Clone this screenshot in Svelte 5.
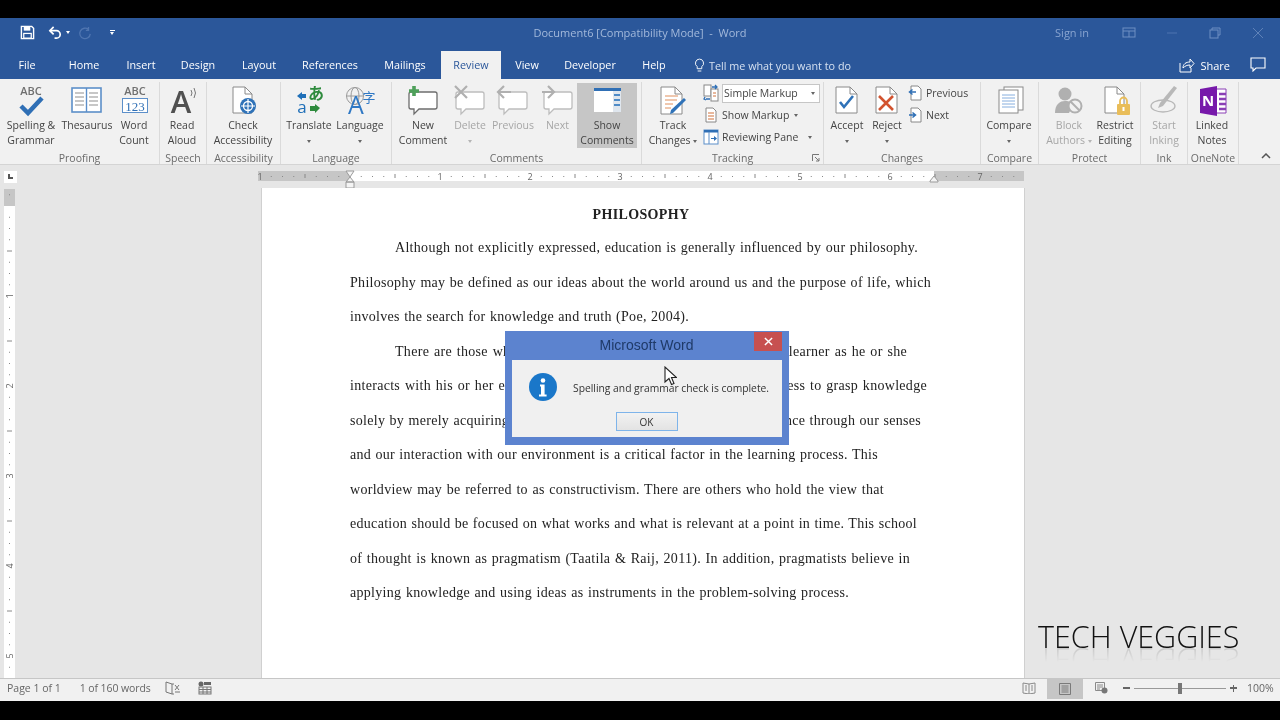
<script>
	// width of each tab, taken so the labels sit on the same centres as in Word
	const tabs = [
		{ name: 'File', w: 46 },
		{ name: 'Home', w: 68 },
		{ name: 'Insert', w: 46 },
		{ name: 'Design', w: 68 },
		{ name: 'Layout', w: 54 },
		{ name: 'References', w: 88 },
		{ name: 'Mailings', w: 62 },
		{ name: 'Review', w: 60 },
		{ name: 'View', w: 52 },
		{ name: 'Developer', w: 74 },
		{ name: 'Help', w: 54 }
	];

	const groups = [
		{ name: 'Proofing', w: 160, items: [
			{ icon: 'spell', w: 58, lines: ['Spelling &', 'Grammar'] },
			{ icon: 'thesaurus', w: 54, lines: ['Thesaurus'] },
			{ icon: 'count', w: 40, lines: ['Word', 'Count'] }
		] },
		{ name: 'Speech', w: 47, items: [{ icon: 'read', w: 40, lines: ['Read', 'Aloud'] }] },
		{ name: 'Accessibility', w: 74, items: [{ icon: 'check', w: 68, lines: ['Check', 'Accessibility'] }] },
		{ name: 'Language', w: 111, items: [
			{ icon: 'translate', w: 52, lines: ['Translate'], drop: true },
			{ icon: 'language', w: 50, lines: ['Language'], drop: true }
		] },
		{ name: 'Comments', w: 250, items: [
			{ icon: 'new', w: 58, lines: ['New', 'Comment'] },
			{ icon: 'delete', w: 36, lines: ['Delete'], drop: true, off: true },
			{ icon: 'prev', w: 50, lines: ['Previous'], off: true },
			{ icon: 'next', w: 39, lines: ['Next'], off: true },
			{ icon: 'show', w: 60, lines: ['Show', 'Comments'], on: true }
		] },
		{ name: 'Tracking', w: 182, launcher: true, items: [
			{ icon: 'track', w: 58, lines: ['Track', 'Changes'], tail: true },
			{ w: 120, rows: [
				{ icon: 'markup', text: 'Simple Markup', select: true },
				{ icon: 'showmark', text: 'Show Markup', tail: true },
				{ icon: 'pane', text: 'Reviewing Pane', far: true }
			] }
		] },
		{ name: 'Changes', w: 157, items: [
			{ icon: 'accept', w: 42, lines: ['Accept'], drop: true },
			{ icon: 'reject', w: 38, lines: ['Reject'], drop: true },
			{ w: 70, rows: [
				{ icon: 'docprev', text: 'Previous' },
				{ icon: 'docnext', text: 'Next' }
			] }
		] },
		{ name: 'Compare', w: 58, items: [{ icon: 'compare', w: 52, lines: ['Compare'], drop: true }] },
		{ name: 'Protect', w: 102, items: [
			{ icon: 'block', w: 56, lines: ['Block', 'Authors'], tail: true, off: true },
			{ icon: 'restrict', w: 36, lines: ['Restrict', 'Editing'] }
		] },
		{ name: 'Ink', w: 47, items: [{ icon: 'ink', w: 42, lines: ['Start', 'Inking'], off: true }] },
		{ name: 'OneNote', w: 51, items: [{ icon: 'onenote', w: 44, lines: ['Linked', 'Notes'] }] }
	];

	const lines = [
		{ w: 523, indent: true, text: 'Although not explicitly expressed, education is generally influenced by our philosophy.' },
		{ w: 581, text: 'Philosophy may be defined as our ideas about the world around us and the purpose of life, which' },
		{ w: 339, text: 'involves the search for knowledge and truth (Poe, 2004).' },
		{ w: 512, indent: true, text: 'There are those who believe that all reality is constructed by the learner as he or she' },
		{ w: 577, text: 'interacts with his or her environment and that it is up to a learner\u2019s process to grasp knowledge' },
		{ w: 571, text: 'solely by merely acquiring facts, while others would value direct experience through our senses' },
		{ w: 528, text: 'and our interaction with our environment is a critical factor in the learning process. This' },
		{ w: 534, text: 'worldview may be referred to as constructivism. There are others who hold the view that' },
		{ w: 567, text: 'education should be focused on what works and what is relevant at a point in time. This school' },
		{ w: 560, text: 'of thought is known as pragmatism (Taatila & Raij, 2011). In addition, pragmatists believe in' },
		{ w: 499, text: 'applying knowledge and using ideas as instruments in the problem-solving process.' }
	];

	// one tick every eighth of an inch, 90px to the inch
	const step = 11.25;
	const marks = [];
	for (let i = -8; i <= 60; i++) marks.push(i);
	const vmarks = [];
	for (let i = -1; i <= 41; i++) vmarks.push(i);
</script>

{#snippet bubble(x, stroke)}
	<path d="M{x} 10h24a2 2 0 0 1 2 2v13a2 2 0 0 1-2 2h-16l-5 5v-5h-3a2 2 0 0 1-2-2v-13a2 2 0 0 1 2-2z" fill="#fff" stroke={stroke} stroke-width="1.3" />
{/snippet}

{#snippet doc(x, y, w, h)}
	<path d="M{x} {y}h{w - 7}l7 7v{h - 7}h-{w}z" fill="#fff" stroke="#8a8a8a" stroke-width="1" />
	<path d="M{x + w - 7} {y}v7h7" fill="none" stroke="#8a8a8a" stroke-width="1" />
{/snippet}

{#snippet icon(name)}
	<svg class="big" viewBox="0 0 40 36" width="40" height="36" aria-hidden="true">
		{#if name === 'spell'}
			<text x="20" y="13" class="abc">ABC</text>
			<path d="M10 24l7 7 14-15" fill="none" stroke="#2f6fb5" stroke-width="4.5" />
		{:else if name === 'thesaurus'}
			<rect x="5" y="6" width="29" height="24" fill="#fff" stroke="#5c8fc9" stroke-width="1.6" />
			<path d="M19.5 6v24" stroke="#5c8fc9" stroke-width="1.4" />
			<path d="M8 11h9M8 15h9M8 19h9M8 23h9M22 11h9M22 15h9M22 19h9M22 23h9" stroke="#8f8f8f" stroke-width="1.1" />
		{:else if name === 'count'}
			<text x="21" y="13" class="abc">ABC</text>
			<rect x="8.5" y="16.5" width="25" height="14" fill="#fff" stroke="#5c8fc9" />
			<text x="21" y="28.5" class="nums">123</text>
		{:else if name === 'read'}
			<text x="19" y="31" class="bigA">A</text>
			<path d="M32 6q3 5 0 10M29 8q2 3 0 6" fill="none" stroke="#777" />
		{:else if name === 'check'}
			{@render doc(10, 5, 19, 26)}
			<circle cx="25" cy="24" r="8" fill="#2f72b8" />
			<circle cx="25" cy="24" r="4.5" fill="none" stroke="#fff" stroke-width="1.3" />
			<path d="M25 17v14M18 24h14" stroke="#fff" stroke-width="1.2" />
		{:else if name === 'translate'}
			<path d="M8 14l5-4v2h4v4h-4v2z" fill="#1f6fb8" />
			<text x="27" y="17" class="kana">あ</text>
			<text x="13" y="31" class="latin">a</text>
			<path d="M31 26l-5 5v-2h-5v-5h5v-2z" fill="#2e8b3d" />
		{:else if name === 'language'}
			<circle cx="15" cy="14" r="8.5" fill="none" stroke="#9a9a9a" />
			<ellipse cx="15" cy="14" rx="4" ry="8.5" fill="none" stroke="#9a9a9a" />
			<path d="M6.5 14h17" stroke="#9a9a9a" />
			<text x="16" y="32" class="langA">A</text>
			<text x="29" y="20" class="han">字</text>
		{:else if name === 'new'}
			{@render bubble(8, '#6d6d6d')}
			<path d="M11 4v10M6 9h10" stroke="#4ea05a" stroke-width="3.6" />
		{:else if name === 'delete'}
			{@render bubble(8, '#bdbdbd')}
			<path d="M5 4l12 12M17 4l-12 12" stroke="#b0b0b0" stroke-width="2.2" />
		{:else if name === 'prev'}
			{@render bubble(8, '#bdbdbd')}
			<path d="M18 10h-12M11 4l-6 6 6 6" fill="none" stroke="#b0b0b0" stroke-width="2.2" />
		{:else if name === 'next'}
			{@render bubble(8, '#bdbdbd')}
			<path d="M4 10h12M10 4l6 6-6 6" fill="none" stroke="#b0b0b0" stroke-width="2.2" />
		{:else if name === 'show'}
			<rect x="7" y="6" width="27" height="24" fill="#fff" />
			<rect x="7" y="6" width="27" height="3" fill="#2f6fb5" />
			<rect x="26" y="9" width="8" height="21" fill="#dfe6ee" />
			<path d="M27 13h6M27 18h6M27 23h6" stroke="#4f8bc7" stroke-width="2" />
		{:else if name === 'track'}
			{@render doc(8, 5, 21, 27)}
			<path d="M12 14h13M12 18h12M12 22h8M12 26h6" stroke="#e0905f" />
			<path d="M33 18l-13 13-3 1 1-4 13-12z" fill="#2f72b8" />
		{:else if name === 'accept'}
			{@render doc(9, 5, 21, 26)}
			<path d="M13 20l4 5 9-11" fill="none" stroke="#2f72b8" stroke-width="2.6" />
		{:else if name === 'reject'}
			{@render doc(9, 5, 21, 26)}
			<path d="M12 14l14 14M26 14l-14 14" stroke="#d2532f" stroke-width="2.6" />
		{:else if name === 'compare'}
			<rect x="15" y="5" width="19" height="23" fill="#fff" stroke="#8a8a8a" />
			<rect x="10" y="8" width="19" height="23" fill="#fff" stroke="#8a8a8a" />
			<path d="M13 13h13M13 16h13M13 19h13M13 22h13M13 25h13" stroke="#86aede" />
		{:else if name === 'block'}
			<circle cx="16" cy="12" r="6.5" fill="#b0b0b0" />
			<path d="M6 31c0-9 5-12 10-12s7 2 8 4l-4 8z" fill="#b0b0b0" />
			<circle cx="26" cy="24" r="6.5" fill="#f1f1f1" stroke="#b0b0b0" stroke-width="2" />
			<path d="M21.5 19.5l9 9" stroke="#b0b0b0" stroke-width="2" />
		{:else if name === 'restrict'}
			{@render doc(10, 5, 19, 26)}
			<rect x="22" y="22" width="13" height="11" rx="1" fill="#e9bd59" />
			<path d="M25 22v-3a3.5 3.5 0 0 1 7 0v3" fill="none" stroke="#e9bd59" stroke-width="1.8" />
			<rect x="27.5" y="25" width="2" height="4" fill="#fff" />
		{:else if name === 'ink'}
			<ellipse cx="19" cy="24" rx="12" ry="6" fill="none" stroke="#b8b8b8" stroke-width="1.3" />
			<path d="M33 6l-14 18-5 2 2-5 14-17z" fill="#b8b8b8" />
		{:else if name === 'onenote'}
			<path d="M24 7h10v24h-10z" fill="#fff" stroke="#8a3fb5" />
			<path d="M27 12h7M27 17h7M27 22h7M27 27h7" stroke="#8a3fb5" stroke-width="2.4" />
			<path d="M8 7l17-3v30l-17-3z" fill="#7719aa" />
			<text x="16" y="24" class="oneN">N</text>
		{/if}
	</svg>
{/snippet}

{#snippet smallIcon(name)}
	<svg class="small" viewBox="0 0 16 18" width="16" height="18" aria-hidden="true">
		{#if name === 'markup'}
			<rect x="1" y="1" width="7" height="11" fill="#fff" stroke="#888" />
			<rect x="8" y="5" width="7" height="12" fill="#fff" stroke="#888" />
			<path d="M3 15h4M2 13l-1 2 2 1" fill="none" stroke="#2f6fb5" stroke-width="1.3" />
			<path d="M9 3h5M12 1l2 2-2 2" fill="none" stroke="#2f6fb5" stroke-width="1.3" />
			<path d="M10 9h3M10 12h3" stroke="#d0703a" />
		{:else if name === 'showmark'}
			<path d="M3 2h7l3 3v11h-10z" fill="#fff" stroke="#888" />
			<path d="M5 7h6M5 10h6M5 13h6" stroke="#d0703a" />
		{:else if name === 'pane'}
			<rect x="1" y="2" width="14" height="14" fill="#fff" stroke="#5c8fc9" />
			<rect x="1" y="2" width="14" height="2.5" fill="#2f6fb5" />
			<path d="M6 4v12" stroke="#5c8fc9" />
			<path d="M8 10h3v-2l3 2.5-3 2.500v-2h-3z" fill="#2f6fb5" />
		{:else if name === 'docprev'}
			<path d="M4 2h7l3 3v11h-10z" fill="#fff" stroke="#888" />
			<path d="M9 8h-6M5.500 5.500l-3 2.500 3 2.500" fill="none" stroke="#2f6fb5" stroke-width="1.5" />
		{:else if name === 'docnext'}
			<path d="M4 2h7l3 3v11h-10z" fill="#fff" stroke="#888" />
			<path d="M2 9h6M5.500 6.500l3 2.500-3 2.500" fill="none" stroke="#2f6fb5" stroke-width="1.5" />
		{/if}
	</svg>
{/snippet}

<div class="word">
	<header class="titlebar">
		<div class="qat">
			<svg viewBox="0 0 16 16" width="15" height="15" aria-hidden="true">
				<path d="M1.500 1.500h11l2 2v11h-13z" fill="none" stroke="#fff" stroke-width="1.500" />
				<rect x="4" y="2" width="7" height="4" fill="#fff" />
				<rect x="4" y="9" width="8" height="5" fill="none" stroke="#fff" stroke-width="1.300" />
			</svg>
			<svg class="undo" viewBox="0 0 16 16" width="15" height="15" aria-hidden="true">
				<path d="M6 2l-4 4 4 4" fill="none" stroke="#fff" stroke-width="1.800" />
				<path d="M2 6h7a4 4 0 0 1 0 8h-2" fill="none" stroke="#fff" stroke-width="1.800" />
			</svg>
			<span class="caret light"></span>
			<svg class="redo" viewBox="0 0 16 16" width="14" height="14" aria-hidden="true">
				<path d="M12 4a6 6 0 1 0 2 5M12 1v4h-3" fill="none" stroke="#4f75b0" stroke-width="1.500" />
			</svg>
			<span class="custom"></span>
		</div>
		<div class="doctitle">Document6 [Compatibility Mode]&nbsp; -&nbsp; Word</div>
		<div class="winctl">
			<span class="signin">Sign in</span>
			<svg viewBox="0 0 14 12" width="14" height="12" aria-hidden="true">
				<rect x="1" y="1" width="12" height="9" fill="none" stroke="#6f8fc2" />
				<path d="M1 4h12M7 4v6" stroke="#6f8fc2" />
			</svg>
			<svg viewBox="0 0 14 12" width="14" height="12" aria-hidden="true"><path d="M2 6h10" stroke="#4f75b0" /></svg>
			<svg viewBox="0 0 14 12" width="14" height="12" aria-hidden="true">
				<path d="M4 3v-2h8v7h-2" fill="none" stroke="#6f8fc2" />
				<rect x="2" y="3" width="8" height="8" fill="none" stroke="#6f8fc2" />
			</svg>
			<svg viewBox="0 0 14 12" width="14" height="12" aria-hidden="true"><path d="M2 1l10 10M12 1l-10 10" stroke="#5f82b8" /></svg>
		</div>
	</header>

	<nav class="tabs">
		{#each tabs as tab}
			<span class="tab" class:active={tab.name === 'Review'} style="width: {tab.w}px">{tab.name}</span>
		{/each}
		<span class="tell">
			<svg viewBox="0 0 12 16" width="11" height="15" aria-hidden="true">
				<path d="M6 1a4.500 4.500 0 0 0-2.500 8.200v2.300h5v-2.300a4.500 4.500 0 0 0-2.500-8.200zM4 14h4" fill="none" stroke="#fff" />
			</svg>
			Tell me what you want to do
		</span>
		<span class="share">
			<svg viewBox="0 0 16 16" width="16" height="16" aria-hidden="true">
				<path d="M1 6v9h11v-4M4 11c0-4 3-6 7-6v-3l4 4.500-4 4.500v-3c-3 0-5 1-7 3z" fill="none" stroke="#fff" />
			</svg>
			Share
		</span>
		<svg class="talk" viewBox="0 0 16 16" width="16" height="16" aria-hidden="true">
			<path d="M1 2h14v10h-9l-3 3v-3h-2z" fill="none" stroke="#fff" stroke-width="1.100" />
		</svg>
	</nav>

	<section class="ribbon">
		{#each groups as g}
			<div class="group" style="width: {g.w}px">
				<div class="cmds">
					{#each g.items as it}
						{#if it.rows}
							<div class="rows" style="width: {it.w}px">
								{#each it.rows as r}
									<div class="row">
										{@render smallIcon(r.icon)}
										<span class="rowtext" class:select={r.select} class:far={r.far}>
											{r.text}
											{#if r.tail}<span class="caret"></span>{/if}
											{#if r.select || r.far}<span class="caret end"></span>{/if}
										</span>
									</div>
								{/each}
							</div>
						{:else}
							<div class="cmd" class:off={it.off} class:on={it.on} style="width: {it.w}px">
								{@render icon(it.icon)}
								{#each it.lines as line, i}
									<span class="line">
										{line}
										{#if it.tail && i === it.lines.length - 1}<span class="caret"></span>{/if}
									</span>
								{/each}
								{#if it.drop}<span class="line"><span class="caret"></span></span>{/if}
							</div>
						{/if}
					{/each}
				</div>
				<div class="gname">{g.name}</div>
				{#if g.launcher}
					<svg class="launcher" viewBox="0 0 8 8" width="8" height="8" aria-hidden="true">
						<path d="M.5 7v-6.500h6.500M3 3l4 4M7 4v3h-3" fill="none" stroke="#777" />
					</svg>
				{/if}
			</div>
		{/each}
		<svg class="collapse" viewBox="0 0 10 6" width="10" height="6" aria-hidden="true">
			<path d="M1 5l4-4 4 4" fill="none" stroke="#555" stroke-width="1.500" />
		</svg>
	</section>

	<div class="workspace">
		<aside class="rail">
			<div class="tabstop"><span></span></div>
			<svg class="vruler" viewBox="0 0 11 489" width="11" height="489" aria-hidden="true">
				<rect width="11" height="17" fill="#c6c6c6" />
				<rect y="17" width="11" height="472" fill="#fff" />
				{#each vmarks as i}
					{#if i !== 0 && i % 8 === 0}
						<text class="rnum" transform="translate(9 {17 + i * step}) rotate(-90)">{Math.abs(i) / 8}</text>
					{:else if i !== 0 && i % 4 === 0}
						<path d="M3 {17 + i * step}h5" stroke="#888" />
					{:else if i !== 0}
						<path d="M5 {17 + i * step}h1" stroke="#888" />
					{/if}
				{/each}
			</svg>
		</aside>
		<main class="main">
			<svg class="hruler" viewBox="0 0 766 23" width="766" height="23" aria-hidden="true">
				<rect y="6" width="766" height="10" fill="#c6c6c6" />
				<rect x="92" y="6" width="584" height="10" fill="#fff" />
				{#each marks as i}
					{#if i !== 0 && i % 8 === 0}
						<text class="rnum" x={92 + i * step} y="14.500">{Math.abs(i) / 8}</text>
					{:else if i !== 0 && i % 4 === 0}
						<path d="M{92 + i * step} 9v4" stroke="#888" />
					{:else if i !== 0}
						<path d="M{92 + i * step} 11v1" stroke="#888" />
					{/if}
				{/each}
				<path d="M88 6h8l-4 6zM92 12l4 5h-8zM88 17h8v6h-8zM672 16l4-5 4 5v1h-8z" fill="#f4f4f4" stroke="#9a9a9a" />
			</svg>
			<article class="page">
				<h1>PHILOSOPHY</h1>
				{#each lines as l}
					<p class:indent={l.indent} style="width: {l.w}px">{l.text}</p>
				{/each}
			</article>
		</main>
	</div>

	<footer class="status">
		<span class="pageinfo">Page 1 of 1</span>
		<span class="wordinfo">1 of 160 words</span>
		<svg class="proof" viewBox="0 0 16 14" width="16" height="14" aria-hidden="true">
			<path d="M1 1l6 2v10l-6-2zM7 3h2M7 13h2" fill="none" stroke="#777" />
			<path d="M10 4l4 5M14 4l-4 5M10 11h5" stroke="#777" />
		</svg>
		<svg class="macro" viewBox="0 0 14 14" width="14" height="14" aria-hidden="true">
			<circle cx="3" cy="3" r="2.500" fill="#666" />
			<rect x="6" y="1" width="7" height="3" fill="#666" />
			<rect x="1" y="6" width="12" height="7" fill="none" stroke="#777" />
			<path d="M1 8.500h12M1 11h12M5 6v7M9 6v7" stroke="#777" />
		</svg>
		<div class="views">
			<span class="view">
				<svg viewBox="0 0 14 12" width="14" height="12" aria-hidden="true">
					<path d="M1 1l6 1 6-1v10l-6 1-6-1zM7 2v10M3 4h2M3 6h2M3 8h2M9 4h2M9 6h2M9 8h2" fill="none" stroke="#8a8a8a" />
				</svg>
			</span>
			<span class="view current">
				<svg viewBox="0 0 14 12" width="14" height="12" aria-hidden="true">
					<path d="M1.500 .5h11v11h-11zM3.500 3h7M3.500 5h7M3.500 7h7M3.500 9h7" fill="none" stroke="#7a7a7a" />
				</svg>
			</span>
			<span class="view">
				<svg viewBox="0 0 14 12" width="14" height="12" aria-hidden="true">
					<path d="M1.500 .5h9v8h-9zM3 3h6M3 5h6M3 7h3" fill="none" stroke="#8a8a8a" />
					<circle cx="10.500" cy="8.500" r="3" fill="#777" />
				</svg>
			</span>
		</div>
		<div class="zoomctl">
			<span class="pm"></span>
			<span class="slider"><span class="thumb"></span></span>
			<span class="pm plus"></span>
		</div>
		<span class="pct">100%</span>
	</footer>

	<div class="watermark">TECH VEGGIES</div>

	<div class="dialog" role="dialog">
		<div class="dlgtitle">Microsoft Word</div>
		<span class="dlgclose">
			<svg viewBox="0 0 10 10" width="9" height="9" aria-hidden="true">
				<path d="M1 1l8 8M9 1l-8 8" stroke="#fff" stroke-width="1.600" />
			</svg>
		</span>
		<div class="client">
			<div class="msg">
				<svg viewBox="0 0 28 28" width="28" height="28" aria-hidden="true">
					<circle cx="14" cy="14" r="14" fill="#1a77c9" />
					<circle cx="14" cy="7.500" r="2.300" fill="#fff" />
					<path d="M11 11.500h4.600v10h2v2h-7.600v-2h2v-8h-1z" fill="#fff" />
				</svg>
				<span>Spelling and grammar check is complete.</span>
			</div>
			<button class="ok" type="button">OK</button>
		</div>
	</div>

	<svg class="pointer" viewBox="0 0 13 20" width="13" height="20" aria-hidden="true">
		<path d="M1 1v15l4-3.500 2.500 6 2.500-1-2.500-6h5z" fill="#fff" stroke="#222" stroke-width="1.100" />
	</svg>
</div>

<style>
	:global(body) {
		background: #000;
	}

	.word {
		position: relative;
		width: 1280px;
		height: 720px;
		padding: 18px 0 19px;
		box-sizing: border-box;
		display: flex;
		flex-direction: column;
		overflow: hidden;
		font-family: 'Open Sans', 'Noto Sans', sans-serif;
		font-size: 10.5px;
		color: #444;
		background: #000;
		filter: blur(0.4px);
	}

	.titlebar {
		height: 29px;
		display: grid;
		grid-template-columns: 1fr auto 1fr;
		align-items: center;
		background: #2b579a;
	}

	.qat {
		display: flex;
		align-items: center;
		padding-left: 20px;
	}

	.undo {
		margin-left: 13px;
	}

	.redo {
		margin-left: 8px;
	}

	.custom {
		margin-left: 18px;
		width: 5px;
		height: 5px;
		border-top: 1px solid #fff;
		box-sizing: border-box;
		position: relative;
	}

	.custom::after {
		content: '';
		position: absolute;
		left: 0;
		top: 1px;
		border: 2.5px solid transparent;
		border-top: 3px solid #fff;
	}

	.doctitle {
		color: #a3b9db;
		font-size: 11px;
	}

	.winctl {
		display: flex;
		align-items: center;
		color: #88a4d0;
		font-size: 11px;
		padding-right: 15px;
		justify-content: flex-end;
		gap: 29px;
	}

	.signin {
		margin-right: 4px;
	}

	.tabs {
		height: 32px;
		display: flex;
		align-items: flex-end;
		padding-left: 4px;
		background: #2b579a;
		color: #fff;
		font-size: 10.8px;
	}

	.tab {
		height: 28px;
		line-height: 28px;
		text-align: center;
		flex: none;
	}

	.tab.active {
		margin-left: 5px;
		background: #f1f1f1;
		color: #2b579a;
	}

	.tell {
		height: 28px;
		display: flex;
		align-items: center;
		gap: 4px;
		margin-left: 13px;
		color: #d5e0f0;
	}

	.share {
		height: 28px;
		display: flex;
		align-items: center;
		gap: 5px;
		margin-left: auto;
		font-size: 11px;
	}

	.talk {
		margin: 0 14px 7px 20px;
	}

	.ribbon {
		height: 86px;
		padding-top: 3px;
		box-sizing: border-box;
		display: flex;
		background: #f1f1f1;
		border-bottom: 1px solid #d4d4d4;
	}

	.group {
		position: relative;
		height: 82px;
		box-sizing: border-box;
		padding-left: 2px;
		display: flex;
		flex-direction: column;
		border-right: 1px solid #dadada;
	}

	.cmds {
		flex: 1;
		display: flex;
	}

	.gname {
		height: 12px;
		line-height: 12px;
		text-align: center;
		color: #6a6a6a;
		margin-left: -2px;
	}

	.launcher {
		position: absolute;
		right: 3px;
		bottom: 2px;
	}

	.cmd {
		display: flex;
		flex-direction: column;
		align-items: center;
		height: 66px;
		flex: none;
	}

	.cmd.off {
		color: #a6a6a6;
	}

	.cmd.on {
		background: #c6c6c6;
		height: 65px;
		margin-top: 1px;
	}

	.cmd.on .big {
		margin-top: -1px;
	}

	.big {
		flex: none;
		overflow: visible;
	}

	.line {
		height: 15px;
		line-height: 15px;
		white-space: nowrap;
	}

	.rows {
		flex: none;
		padding-left: 1px;
		box-sizing: border-box;
	}

	.row {
		height: 22px;
		display: flex;
		align-items: center;
		gap: 3px;
	}

	.small {
		flex: none;
	}

	.rowtext {
		white-space: nowrap;
		display: flex;
		align-items: center;
		gap: 5px;
	}

	.rowtext.select {
		width: 98px;
		height: 19px;
		padding-left: 1px;
		box-sizing: border-box;
		background: #fff;
		border: 1px solid #c6c6c6;
	}

	.rowtext.far {
		width: 94px;
	}

	.caret.end {
		margin-left: auto;
		margin-right: 4px;
	}

	.caret {
		display: inline-block;
		width: 0;
		height: 0;
		border: 2.5px solid transparent;
		border-top: 3px solid #666;
		border-bottom: 0;
		vertical-align: middle;
	}

	.caret.light {
		border-top-color: #fff;
		margin-left: 3px;
	}

	.off .caret {
		border-top-color: #b5b5b5;
	}

	.collapse {
		margin: auto 9px 5px auto;
	}

	.workspace {
		flex: 1;
		min-height: 0;
		display: flex;
		background: #e6e6e6;
	}

	.rail {
		width: 18px;
		flex: none;
		box-sizing: border-box;
		padding: 6px 0 0 4px;
		display: flex;
		flex-direction: column;
		gap: 6px;
	}

	.tabstop {
		width: 13px;
		height: 12px;
		background: #fff;
		position: relative;
	}

	.tabstop span {
		position: absolute;
		left: 4px;
		top: 3px;
		width: 5px;
		height: 5px;
		box-sizing: border-box;
		border-left: 2px solid #555;
		border-bottom: 2px solid #555;
	}

	.rnum {
		font-size: 9px;
		fill: #666;
		text-anchor: middle;
	}

	.main {
		flex: 1;
		min-width: 0;
		padding-left: 240px;
		display: flex;
		flex-direction: column;
	}

	.hruler {
		flex: none;
	}

	.page {
		flex: 1;
		min-height: 0;
		width: 764px;
		margin-left: 3px;
		box-sizing: border-box;
		padding: 10px 0 0 88px;
		background: #fff;
		border-left: 1px solid #d0d0d0;
		border-right: 1px solid #d0d0d0;
		overflow: hidden;
		font-family: 'Liberation Serif', serif;
		font-size: 14px;
		color: #222;
	}

	.page h1 {
		margin: 0;
		width: 582px;
		font-size: 14px;
		line-height: 33px;
		letter-spacing: 0.35px;
		text-align: center;
	}

	.page p {
		margin: 0;
		height: 34.5px;
		line-height: 34.5px;
		letter-spacing: 0.3px;
		text-align: justify;
		text-align-last: justify;
	}

	.page p.indent {
		margin-left: 45px;
	}

	.status {
		height: 23px;
		flex: none;
		display: flex;
		align-items: center;
		box-sizing: border-box;
		padding: 0 0 0 7px;
		background: #f1f1f1;
		border-top: 1px solid #c6c6c6;
		color: #666;
	}

	.pageinfo,
	.wordinfo,
	.proof,
	.macro,
	.view svg,
	.zoomctl,
	.pct {
		position: relative;
		top: -2px;
	}

	.wordinfo {
		margin-left: 19px;
		letter-spacing: -0.1px;
	}

	.proof {
		margin-left: 14px;
	}

	.macro {
		margin-left: 17px;
	}

	.views {
		display: flex;
		align-items: center;
		margin-left: auto;
		height: 100%;
	}

	.view {
		width: 36px;
		height: 100%;
		display: flex;
		align-items: center;
		justify-content: center;
	}

	.view.current {
		height: 20px;
		margin-bottom: 2px;
		background: #c6c6c6;
	}

	.view.current svg {
		top: 0;
	}

	.zoomctl {
		display: flex;
		align-items: center;
		margin: 0 10px 0 4px;
	}

	.pm {
		position: relative;
		width: 7px;
		height: 1.5px;
		background: #666;
	}

	.pm.plus::after {
		content: '';
		position: absolute;
		left: 2.75px;
		top: -2.75px;
		width: 1.5px;
		height: 7px;
		background: #666;
	}

	.slider {
		position: relative;
		width: 92px;
		height: 1px;
		margin: 0 4px;
		background: #999;
	}

	.thumb {
		position: absolute;
		left: 44px;
		top: -5px;
		width: 4px;
		height: 11px;
		background: #777;
	}

	.pct {
		width: 33px;
	}

	.watermark {
		position: absolute;
		left: 1038px;
		top: 616px;
		font-size: 30.5px;
		font-weight: 300;
		line-height: 40px;
		color: #111;
		white-space: nowrap;
		-webkit-box-reflect: below -16px linear-gradient(transparent 45%, rgba(0, 0, 0, 0.22));
	}

	.dialog {
		position: absolute;
		left: 505px;
		top: 331px;
		width: 284px;
		height: 114px;
		box-sizing: border-box;
		padding: 29px 7px 7px;
		background: #5c83cf;
		font-family: 'Open Sans', sans-serif;
	}

	.dlgtitle {
		position: absolute;
		left: 0;
		top: 5px;
		width: 283px;
		text-align: center;
		font-family: 'Liberation Sans', sans-serif;
		font-size: 14px;
		line-height: 18px;
		color: #1f3a68;
	}

	.dlgclose {
		position: absolute;
		left: 249px;
		top: 1px;
		width: 28px;
		height: 19px;
		display: flex;
		align-items: center;
		justify-content: center;
		background: #c75050;
	}

	.client {
		height: 77px;
		background: #f0f0f0;
		display: flex;
		flex-direction: column;
		align-items: center;
	}

	.msg {
		align-self: stretch;
		display: flex;
		align-items: center;
		gap: 16px;
		padding: 13px 0 0 17px;
		height: 28px;
		font-size: 10.3px;
		white-space: nowrap;
		color: #333;
	}

	.msg span {
		position: relative;
		top: 1px;
	}

	.ok {
		margin: 11px 0 0 -1px;
		width: 62px;
		height: 19px;
		padding: 0;
		border: 1px solid #7eb4ea;
		background: linear-gradient(#f2f2f2, #e3e3e3);
		font: inherit;
		font-size: 10px;
		color: #333;
	}

	.pointer {
		position: absolute;
		left: 664px;
		top: 366px;
	}

	.big .abc {
		font-size: 11px;
		font-weight: 600;
		fill: #6f6f6f;
		text-anchor: middle;
	}

	.big .nums {
		font-family: 'Liberation Serif', serif;
		font-size: 13px;
		fill: #2f6fb5;
		text-anchor: middle;
	}

	.big .bigA {
		font-size: 31px;
		font-weight: 600;
		fill: #505050;
		text-anchor: middle;
	}

	.big .kana {
		font-family: 'Noto Sans CJK JP', sans-serif;
		font-size: 16px;
		font-weight: 700;
		fill: #2e8b3d;
		text-anchor: middle;
	}

	.big .latin {
		font-size: 17px;
		fill: #1f6fb8;
		text-anchor: middle;
	}

	.big .langA {
		font-size: 25px;
		fill: #2f78c4;
		text-anchor: middle;
	}

	.big .han {
		font-family: 'Noto Sans CJK SC', sans-serif;
		font-size: 13px;
		fill: #2f78c4;
		text-anchor: middle;
	}

	.big .oneN {
		font-size: 15px;
		font-weight: 700;
		fill: #fff;
		text-anchor: middle;
	}
</style>
